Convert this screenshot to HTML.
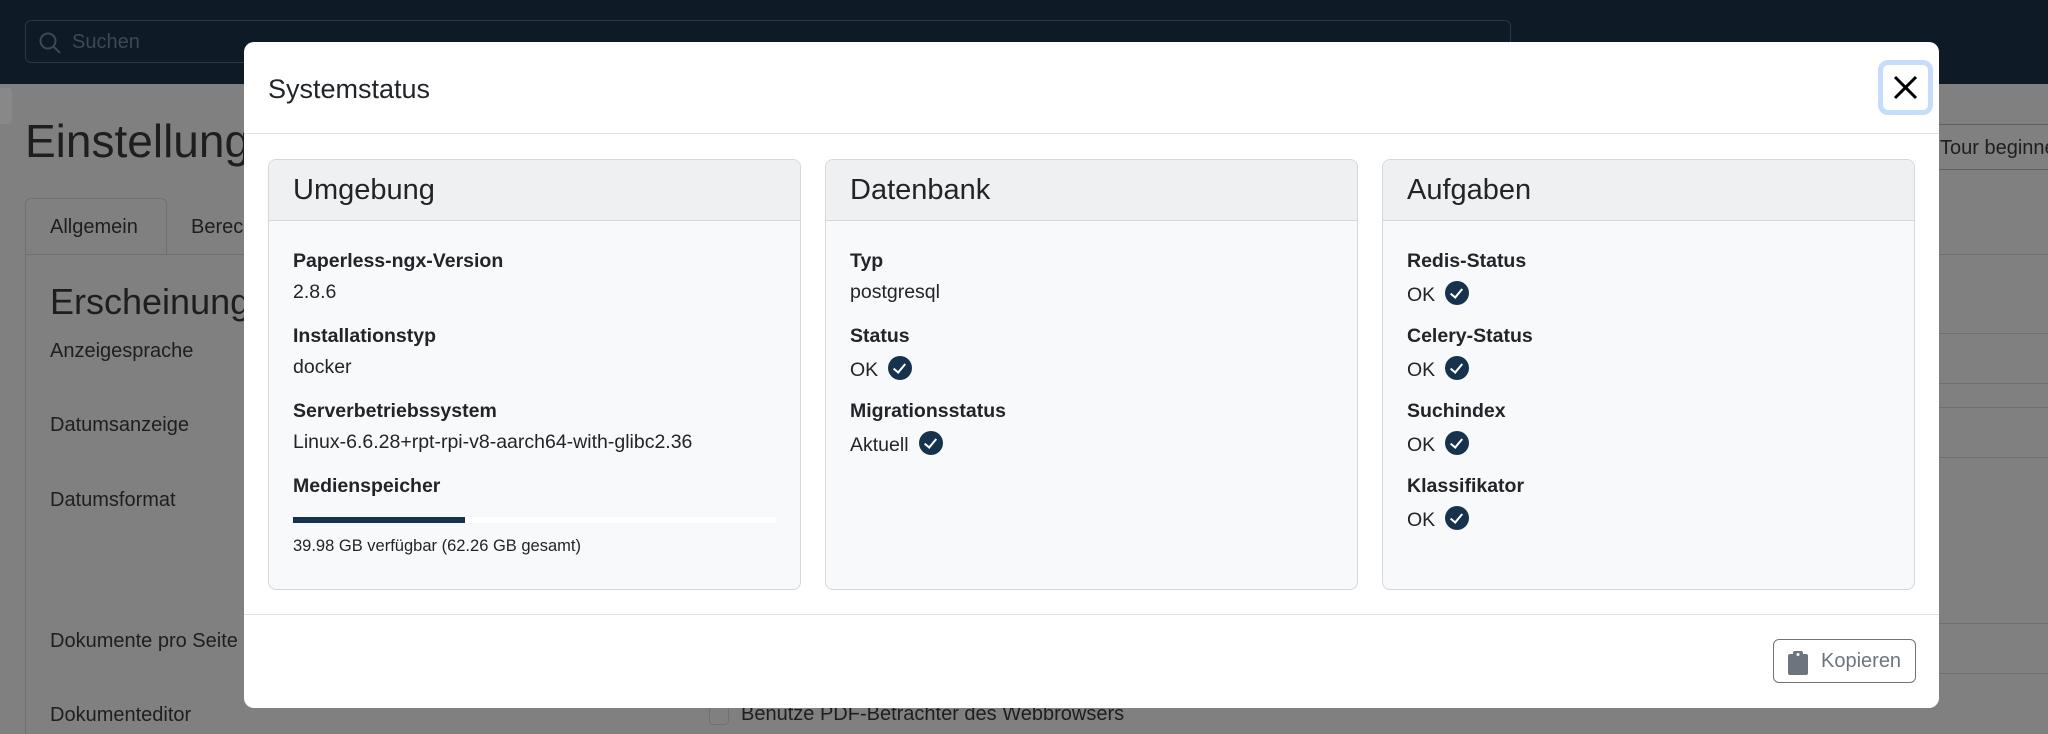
<!DOCTYPE html>
<html><head><meta charset="utf-8"><style>
*{box-sizing:border-box;margin:0;padding:0}
body{width:2048px;height:734px;overflow:hidden;background:#808080;font-family:"Liberation Sans",sans-serif;position:relative;color:#1a1a1a}
.abs{position:absolute}
.nav{left:0;top:0;width:2048px;height:84px;background:#0e1a25}
.search{left:25px;top:20px;width:1486px;height:43px;border:1px solid #2a3845;border-radius:6px;color:#3c4a56;font-size:20px;padding:10px 0 0 46px}
.bg{color:#1e1e1e}
.modal{left:244px;top:42px;width:1695px;height:666px;background:#fff;border-radius:10px}
.mh{position:absolute;left:0;top:0;width:100%;height:92px;border-bottom:1px solid #dee2e6}
.mh h5{position:absolute;left:24px;top:32px;font-size:27px;font-weight:normal;color:#212529}
.close{position:absolute;left:1634px;top:18px;width:55px;height:55px;border:5px solid #c5dcfa;border-radius:10px;background:#fff}
.card{position:absolute;top:117px;width:533px;height:431px;background:#f8f9fa;border:1px solid #d5d8db;border-radius:8px;overflow:hidden}
.ch{height:61px;background:#eef0f2;border-bottom:1px solid #d5d8db;font-size:29px;color:#212529;padding:14px 0 0 24px}
.cb{padding:29px 24px 0;font-size:19.5px;color:#212529}
.lab{font-weight:bold;height:31px}
.val{height:44px}
.ok{display:inline-block;width:24px;height:24px;border-radius:50%;background:#17324d;vertical-align:-4px;margin-left:10px;position:relative}
.ok:after{content:"";position:absolute;left:8px;top:5px;width:5px;height:10px;border:solid #fff;border-width:0 2px 2px 0;transform:rotate(40deg)}
.foot{position:absolute;left:0;top:572px;width:100%;border-top:1px solid #dee2e6}
.btn{position:absolute;left:1529px;top:597px;width:143px;height:44px;border:1px solid #6c757d;border-radius:6px;color:#6c757d;font-size:20px;padding:10px 0 0 47px}
</style></head><body>
<div class="abs nav"></div>
<div class="abs search"><svg class="abs" style="left:12px;top:10px" width="24" height="24" viewBox="0 0 24 24"><circle cx="10" cy="10" r="7.5" fill="none" stroke="#3c4a56" stroke-width="2"/><path d="M15.5 15.5L22 22" stroke="#3c4a56" stroke-width="2"/></svg>Suchen</div>
<div class="abs" style="left:0;top:88px;width:12px;height:36px;background:#888;border-radius:0 4px 4px 0"></div>
<div class="abs bg" style="left:25px;top:114px;font-size:46px">Einstellungen</div>
<div class="abs" style="left:25px;top:198px;width:142px;height:57px;border:1px solid #707070;border-bottom:none;border-radius:6px 6px 0 0"></div>
<div class="abs bg" style="left:50px;top:216px;font-size:20px">Allgemein</div>
<div class="abs bg" style="left:191px;top:216px;font-size:20px">Berechtigungen</div>
<div class="abs" style="left:25px;top:254px;width:2023px;border-top:1px solid #707070"></div>
<div class="abs" style="left:25px;top:254px;height:480px;border-left:1px solid #707070"></div>
<div class="abs bg" style="left:50px;top:281px;font-size:36px">Erscheinungsbild</div>
<div class="abs bg" style="left:50px;top:340px;font-size:20px">Anzeigesprache</div>
<div class="abs bg" style="left:50px;top:414px;font-size:20px">Datumsanzeige</div>
<div class="abs bg" style="left:50px;top:489px;font-size:20px">Datumsformat</div>
<div class="abs bg" style="left:50px;top:630px;font-size:20px">Dokumente pro Seite</div>
<div class="abs bg" style="left:50px;top:704px;font-size:20px">Dokumenteditor</div>
<div class="abs" style="left:709px;top:705px;width:20px;height:20px;border:1px solid #707070;border-radius:4px"></div>
<div class="abs bg" style="left:741px;top:703px;font-size:20px">Benutze PDF-Betrachter des Webbrowsers</div>
<div class="abs" style="left:1939px;top:124px;width:109px;border-top:1px solid #606060"></div>
<div class="abs" style="left:1939px;top:169px;width:109px;border-top:1px solid #606060"></div>
<div class="abs bg" style="left:1940px;top:137px;font-size:20px;white-space:nowrap">Tour beginnen</div>
<div class="abs" style="left:1939px;top:254px;width:109px;border-top:1px solid #707070"></div>
<div class="abs" style="left:1939px;top:333px;width:109px;border-top:1px solid #707070"></div>
<div class="abs" style="left:1939px;top:383px;width:109px;border-top:1px solid #707070"></div>
<div class="abs" style="left:1939px;top:407px;width:109px;border-top:1px solid #707070"></div>
<div class="abs" style="left:1939px;top:457px;width:109px;border-top:1px solid #707070"></div>
<div class="abs" style="left:1939px;top:623px;width:109px;border-top:1px solid #707070"></div>
<div class="abs" style="left:1939px;top:673px;width:109px;border-top:1px solid #707070"></div>

<div class="abs modal">
<div class="mh"><h5>Systemstatus</h5>
<div class="close"><svg width="45" height="45" viewBox="0 0 45 45"><path d="M12 12L33 33M33 12L12 33" stroke="#000" stroke-width="3"/></svg></div></div>

<div class="card" style="left:24px"><div class="ch">Umgebung</div><div class="cb">
<div class="lab">Paperless-ngx-Version</div><div class="val">2.8.6</div>
<div class="lab">Installationstyp</div><div class="val">docker</div>
<div class="lab">Serverbetriebssystem</div><div class="val">Linux-6.6.28+rpt-rpi-v8-aarch64-with-glibc2.36</div>
<div class="lab">Medienspeicher</div>
<div style="margin-top:11px;width:483px;height:6px;background:#fff;position:relative"><div style="width:172px;height:6px;background:#17324d"></div></div>
<div style="font-size:16.5px;margin-top:14px">39.98 GB verfügbar (62.26 GB gesamt)</div>
</div></div>

<div class="card" style="left:581px"><div class="ch">Datenbank</div><div class="cb">
<div class="lab">Typ</div><div class="val">postgresql</div>
<div class="lab">Status</div><div class="val">OK<span class="ok"></span></div>
<div class="lab">Migrationsstatus</div><div class="val">Aktuell<span class="ok"></span></div>
</div></div>

<div class="card" style="left:1138px"><div class="ch">Aufgaben</div><div class="cb">
<div class="lab">Redis-Status</div><div class="val">OK<span class="ok"></span></div>
<div class="lab">Celery-Status</div><div class="val">OK<span class="ok"></span></div>
<div class="lab">Suchindex</div><div class="val">OK<span class="ok"></span></div>
<div class="lab">Klassifikator</div><div class="val">OK<span class="ok"></span></div>
</div></div>

<div class="foot"></div>
<div class="btn"><svg class="abs" style="left:14px;top:11px" width="20" height="24" viewBox="0 0 20 24"><rect x="0" y="3" width="20" height="21" rx="2" fill="#6c757d"/><rect x="5" y="0" width="10" height="7" rx="2" fill="#6c757d"/><circle cx="10" cy="3.5" r="1.5" fill="#fff"/></svg>Kopieren</div>
</div>
</body></html>
